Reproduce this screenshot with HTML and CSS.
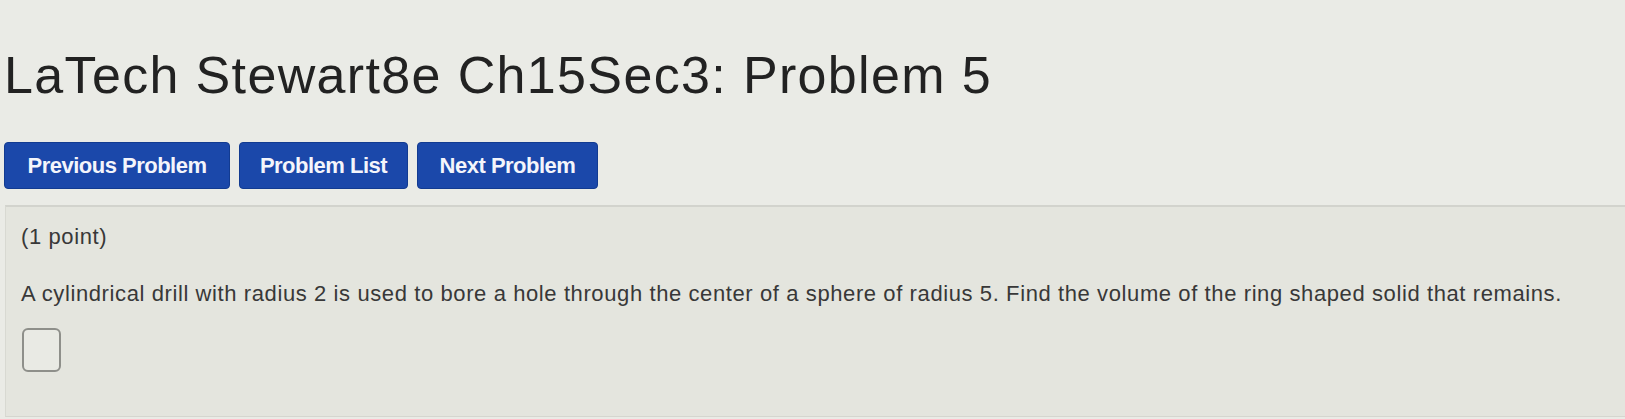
FILE: index.html
```html
<!DOCTYPE html>
<html>
<head>
<meta charset="utf-8">
<link rel="stylesheet" href="styles.css">
</head>
<body>
<div class="page">
  <h1 class="title">LaTech Stewart8e Ch15Sec3: Problem 5</h1>
  <div class="nav">
    <a class="btn btn-prev">Previous Problem</a>
    <a class="btn btn-list">Problem List</a>
    <a class="btn btn-next">Next Problem</a>
  </div>
  <div class="problem">
    <p class="points">(1 point)</p>
    <p class="statement">A cylindrical drill with radius 2 is used to bore a hole through the center of a sphere of radius 5. Find the volume of the ring shaped solid that remains.</p>
    <div class="answer"></div>
  </div>
</div>
</body>
</html>
```

FILE: styles.css
```css
html, body {
  margin: 0;
  padding: 0;
  background: #eaebe6;
  font-family: "Liberation Sans", Arial, sans-serif;
  overflow: hidden;
}
.page {
  width: 1625px;
  height: 419px;
  padding-top: 45px;
  box-sizing: border-box;
}
.title {
  margin: 0 0 37px 4px;
  font-size: 52px;
  line-height: 60px;
  font-weight: normal;
  letter-spacing: 1.35px;
  color: #222;
}
.nav {
  display: flex;
  gap: 9px;
  margin-left: 4px;
  height: 47px;
}
.btn {
  display: flex;
  align-items: center;
  justify-content: center;
  box-sizing: border-box;
  height: 47px;
  background: #1b48aa;
  border: 1px solid #123b91;
  border-radius: 4px;
  color: #f4f5fb;
  font-size: 22px;
  font-weight: bold;
  letter-spacing: -0.5px;
}
.btn-prev { width: 226px; }
.btn-list { width: 169px; }
.btn-next { width: 181px; }
.problem {
  margin-top: 16px;
  margin-left: 5px;
  height: 212px;
  box-sizing: border-box;
  border-top: 2px solid #d2d3cd;
  border-left: 1px solid #d8d9d2;
  border-bottom: 1px solid #d5d6cf;
  background: #e4e5de;
  padding: 17px 0 0 15px;
  color: #383838;
}
.points {
  margin: 0;
  font-size: 22px;
  line-height: 26px;
  letter-spacing: 0.6px;
}
.statement {
  margin: 31px 0 0 0;
  font-size: 22px;
  line-height: 26px;
  letter-spacing: 0.6px;
}
.answer {
  margin: 21px 0 0 1px;
  width: 39px;
  height: 44px;
  box-sizing: border-box;
  border: 2px solid #8e8f8a;
  border-radius: 6px;
  background: #e9eae4;
}
```
